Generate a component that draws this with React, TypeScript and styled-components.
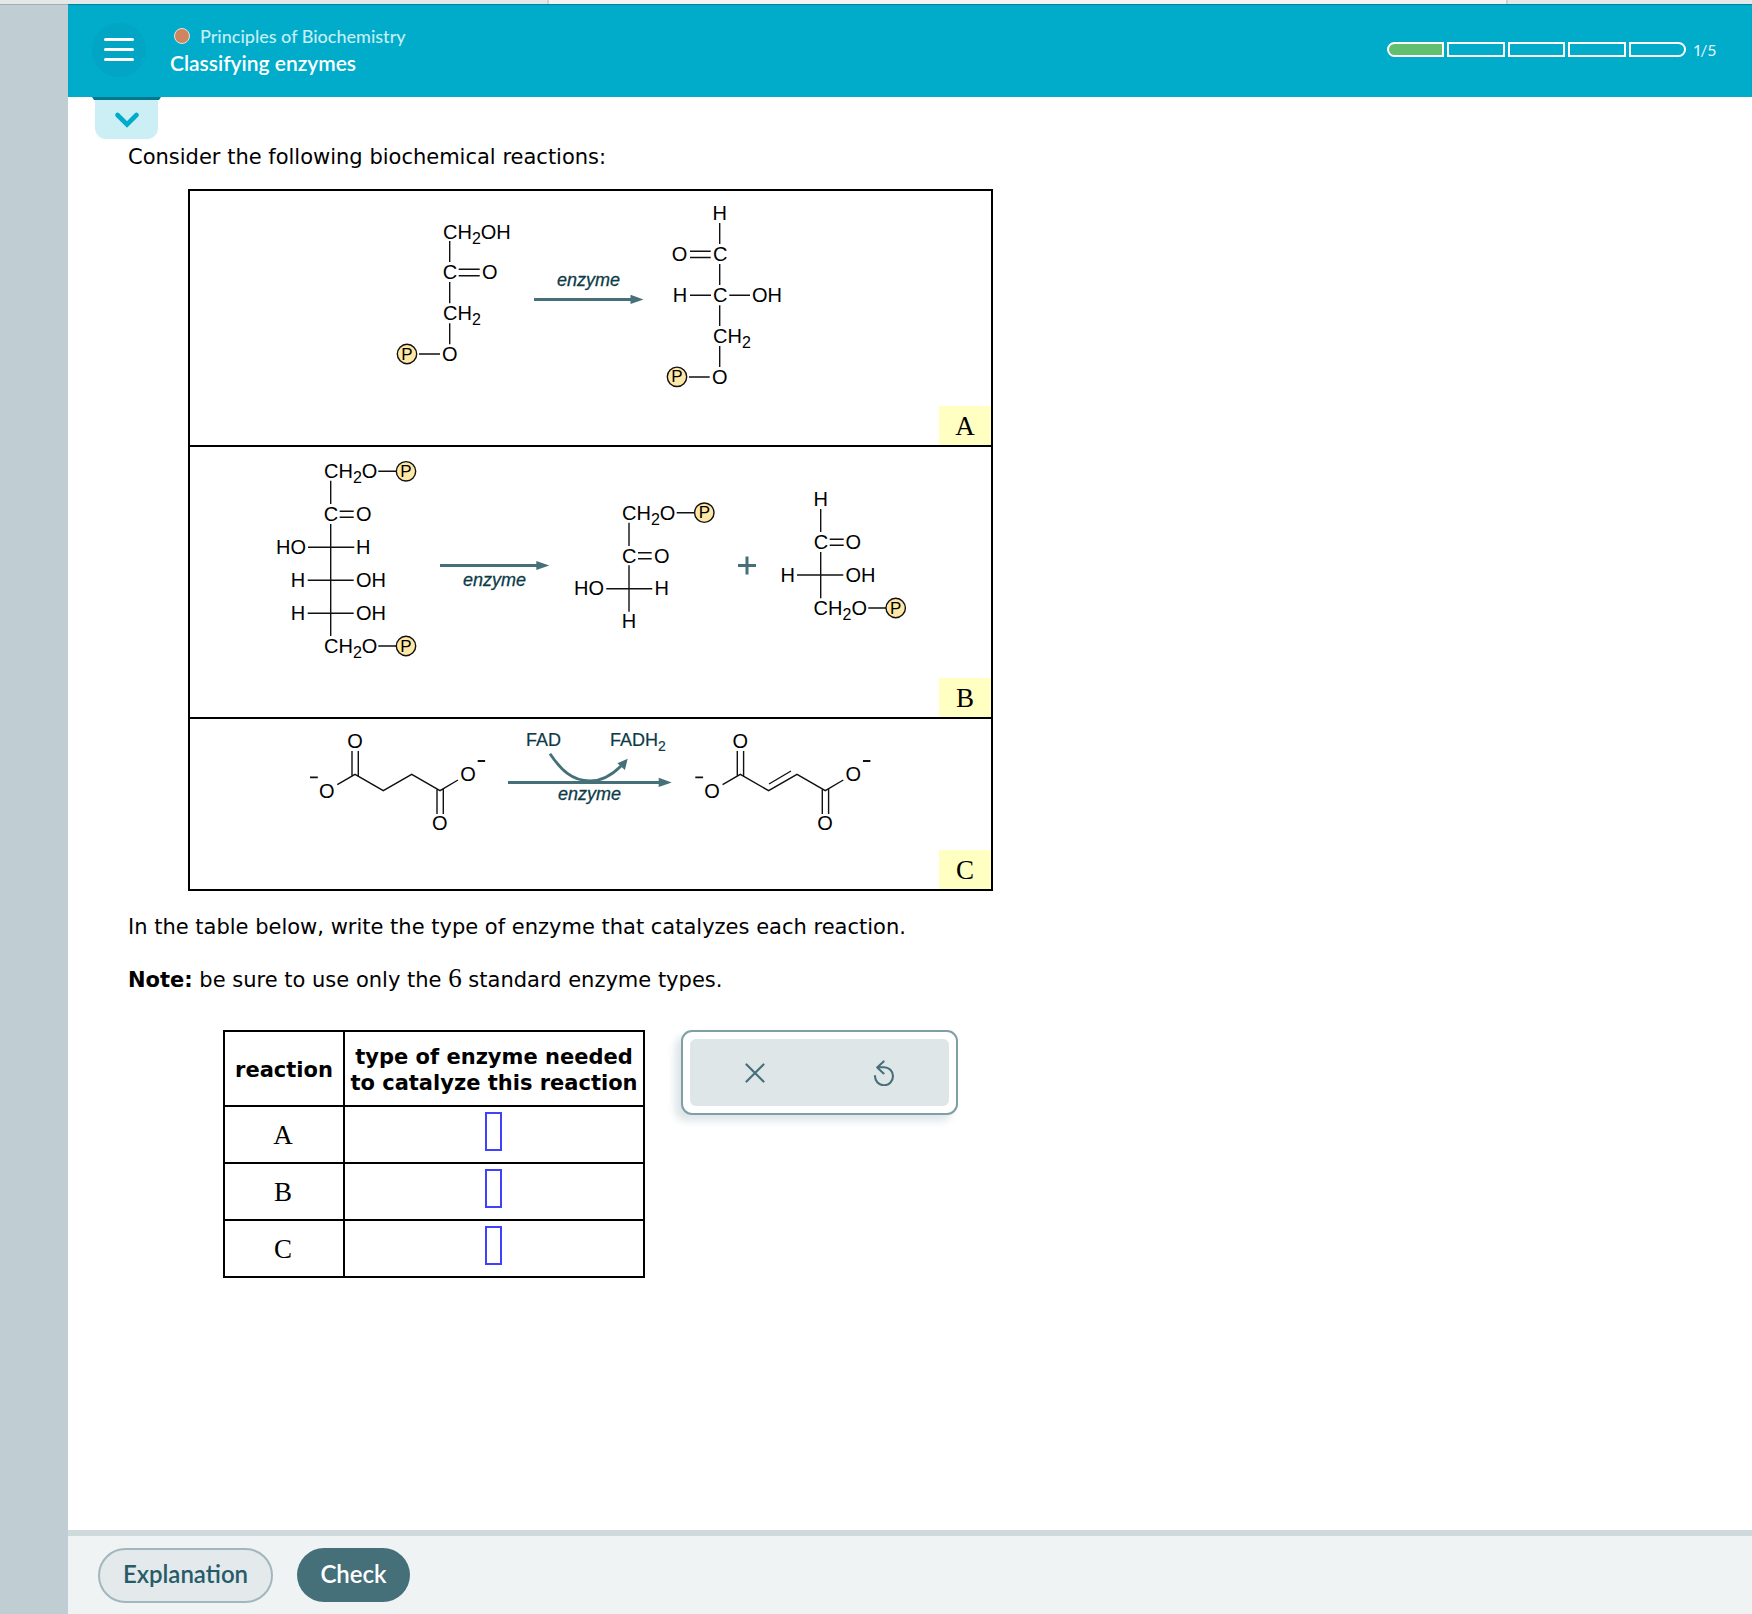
import React from 'react';
import styled, { createGlobalStyle, css } from 'styled-components';

const teal = '#00acca';
const slate = '#457079';
const ink = '#0d3b47';

const GlobalStyle = createGlobalStyle`
  *, *::before, *::after { box-sizing: border-box; }
  body {
    margin: 0;
    background: #fff;
    color: #000;
    font-family: Verdana, 'DejaVu Sans', sans-serif;
  }
`;

const uiFont = css`
  font-family: 'Proxima Nova', Lato, sans-serif;
`;
const mathFont = css`
  font-family: 'Times New Roman', 'Liberation Serif', serif;
`;

const Page = styled.div`
  display: flex;
  flex-direction: column;
  min-height: 100vh;
`;

const TabStrip = styled.div`
  display: flex;
  gap: 2px;
  height: 4px;
  background: #cfd2d3;
`;

const TabEdge = styled.div<{ $grow: number; $active?: boolean }>`
  flex: ${(p) => p.$grow} 0 0;
  background: ${(p) => (p.$active ? '#f2f4f4' : '#e5e8e8')};
`;

const Body = styled.div`
  display: flex;
  flex: 1;
`;

const Gutter = styled.div`
  flex: none;
  width: 68px;
  background: #c0cdd2;
  border-top: 1px solid #9fb0b7;
`;

const Main = styled.div`
  display: flex;
  flex: 1;
  flex-direction: column;
  min-width: 0;
`;

const Header = styled.header`
  ${uiFont}
  display: flex;
  align-items: center;
  height: 93px;
  padding: 0 37px 2px 24px;
  background: ${teal};
  box-shadow: inset 0 1px 1px #04809a;
`;

const MenuButton = styled.button`
  display: flex;
  flex-direction: column;
  align-items: center;
  justify-content: center;
  gap: 7px;
  width: 54px;
  height: 54px;
  margin-right: 24px;
  padding: 0;
  border: 0;
  border-radius: 50%;
  background: #02a5c3;
`;

const MenuLine = styled.span`
  width: 30px;
  height: 3px;
  border-radius: 2px;
  background: #fff;
`;

const Titles = styled.div`
  display: flex;
  flex: 1;
  flex-direction: column;
  gap: 2px;
`;

const Course = styled.div`
  display: flex;
  align-items: center;
  gap: 10px;
  padding-left: 4px;
  color: #c6eef5;
  font-size: 18px;
  font-weight: 500;
  line-height: 24px;
`;

const CourseDot = styled.span`
  width: 16px;
  height: 16px;
  border: 1px solid #e9e4dd;
  border-radius: 50%;
  background: #cf8660;
`;

const Topic = styled.h1`
  margin: 0;
  color: #fff;
  font-size: 21px;
  font-weight: 600;
  line-height: 26px;
`;

const Progress = styled.div`
  display: flex;
  align-items: center;
  gap: 8px;
  color: #e0f6fa;
  font-size: 16px;
  line-height: 24px;
`;

const Count = styled.span`
  width: 21px;
  font-variant-numeric: proportional-nums;
  white-space: nowrap;
`;

const Segments = styled.div`
  display: flex;
  gap: 3px;
  width: 299px;
`;

const Segment = styled.span<{ $done?: boolean }>`
  flex: 1;
  height: 15px;
  border: 2px solid #fff;
  background: ${(p) => (p.$done ? '#61bf70' : 'transparent')};
  &:first-child { border-radius: 8px 0 0 8px; }
  &:last-child { border-radius: 0 8px 8px 0; }
`;

const Content = styled.main`
  flex: 1;
  padding: 0 60px 40px;
`;

const Drawer = styled.button`
  position: relative;
  display: flex;
  align-items: center;
  justify-content: center;
  width: 63px;
  height: 42px;
  margin: 0 0 5px -33px;
  padding: 3px 0 0;
  border: 0;
  border-radius: 0 0 11px 11px;
  background: #cbeff4;
  &::before {
    content: '';
    position: absolute;
    top: 0;
    left: -3px;
    right: -3px;
    height: 3px;
    background: #00788d;
    clip-path: polygon(0 0, 100% 0, calc(100% - 2px) 100%, 2px 100%);
  }
`;

const Text = styled.p`
  margin: 0;
  font-size: 21px;
  line-height: 26px;
  & + & { margin-top: 27px; }
`;

const Six = styled.span`
  ${mathFont}
  font-size: 27px;
  line-height: 20px;
`;

const Reactions = styled.section`
  display: flex;
  flex-direction: column;
  gap: 2px;
  max-width: 805px;
  margin: 19px 0 23px 60px;
  border: 2px solid #000;
  background: #000;
`;

const Reaction = styled.figure`
  display: grid;
  margin: 0;
  background: #fff;
`;

const Drawing = styled.svg`
  grid-area: 1 / 1;
  display: block;
  width: 100%;
  height: auto;
  font-family: Helvetica, 'Liberation Sans', Arial, sans-serif;
  font-size: 20px;
`;

const Caption = styled.figcaption`
  ${mathFont}
  grid-area: 1 / 1;
  align-self: end;
  justify-self: end;
  width: 52px;
  height: 39px;
  background: #ffffc2;
  font-size: 27px;
  line-height: 41px;
  text-align: center;
`;

const AnswerArea = styled.div`
  display: flex;
  align-items: flex-start;
  gap: 36px;
  margin: 37px 0 0 95px;
`;

const AnswerTable = styled.table`
  width: 422px;
  border-collapse: collapse;
  table-layout: fixed;
`;

const Head = styled.th<{ $width: number }>`
  width: ${(p) => p.$width}px;
  height: 75px;
  padding: 2px 0 0;
  border: 2px solid #000;
  font-size: 21px;
  font-weight: 700;
  line-height: 26px;
  white-space: nowrap;
`;

const RowHead = styled.th`
  ${mathFont}
  height: 57px;
  padding: 0 2px 0 0;
  border: 2px solid #000;
  font-size: 27px;
  font-weight: 400;
  line-height: 30px;
`;

const Cell = styled.td`
  padding: 0 2px 6px 0;
  border: 2px solid #000;
  text-align: center;
  vertical-align: middle;
`;

const Answer = styled.input`
  display: block;
  width: 17px;
  height: 39px;
  margin: 0 auto;
  padding: 0;
  border: 2px solid #4040ff;
  outline: 0;
  background: #fff;
  font-size: 20px;
`;

const Palette = styled.div`
  width: 277px;
  padding: 7px;
  border: 2px solid #7f9fa7;
  border-radius: 11px;
  background: #fff;
  box-shadow: -6px 6px 9px #dde4e8;
`;

const PaletteRow = styled.div`
  display: flex;
  height: 67px;
  border-radius: 6px;
  background: #dfe6e8;
`;

const PaletteButton = styled.button`
  display: flex;
  flex: 1;
  align-items: center;
  justify-content: center;
  padding: 0;
  border: 0;
  background: transparent;
`;

const Footer = styled.footer`
  display: flex;
  align-items: center;
  gap: 24px;
  height: 84px;
  padding: 0 30px;
  border-top: 6px solid #cfdadd;
  background: #eff3f4;
`;

const Pill = styled.button<{ $primary?: boolean }>`
  ${uiFont}
  height: ${(p) => (p.$primary ? 54 : 55)}px;
  width: ${(p) => (p.$primary ? 113 : 175)}px;
  padding: 0 0 4px;
  border: ${(p) => (p.$primary ? '0' : '2px solid #a0b7be')};
  border-radius: 28px;
  background: ${(p) => (p.$primary ? slate : '#e4e9eb')};
  color: ${(p) => (p.$primary ? '#fff' : '#265c69')};
  font-size: 24px;
  font-weight: 600;
`;

/* ---- drawing helpers for the reaction schemes ---- */

type At = { x: number; y: number };

const Mid = ({ x, y, children }: At & { children: React.ReactNode }) => (
  <text x={x} y={y} textAnchor="middle">{children}</text>
);

const Bonds = ({ d }: { d: string }) => (
  <path d={d} fill="none" stroke="#111" strokeWidth="1.4" />
);

const Phosphate = ({ x, y }: At) => (
  <g>
    <circle cx={x} cy={y} r="9.7" fill="#ffe8a6" stroke="#111" strokeWidth="1.4" />
    <text x={x} y={Math.floor(y + 6)} textAnchor="middle" fontSize="17">P</text>
  </g>
);

const Methylene = ({ x, y, tail = '' }: At & { tail?: string }) => (
  <text x={x} y={y}>
    CH<tspan fontSize="16" dy="5">2</tspan>
    {tail && <tspan dy="-5">{tail}</tspan>}
  </text>
);

const Arrow = ({ x, y, end }: At & { end: number }) => (
  <g fill={slate}>
    <path d={`M${x} ${y - 1.5}H${end - 12}v3H${x}z`} />
    <path d={`M${end} ${y}l-13 -4.6v9.2z`} />
  </g>
);

const Enzyme = ({ x, y }: At) => (
  <text x={x} y={y} fontSize="18" fontStyle="italic" fill={ink} stroke={ink} strokeWidth="0.3">enzyme</text>
);

const Diacid = ({ shift = 0, unsaturated = false }: { shift?: number; unsaturated?: boolean }) => (
  <g transform={`translate(${shift} 0)`}>
    <Bonds d="M352 751V776M358.3 751V776M337.3 784.7L355 774.3L383.3 790.7L411.7 774.3L440 790.7L458 780M437 789V814M443.3 789V814" />
    {unsaturated && <Bonds d="M383.7 784L405.7 771" />}
    <path d="M310 777.3h7.8M477.7 761h7.4" stroke="#111" strokeWidth="1.8" />
    <Mid x={355} y={748}>O</Mid>
    <Mid x={326.7} y={798}>O</Mid>
    <Mid x={468} y={781}>O</Mid>
    <Mid x={439.7} y={830}>O</Mid>
  </g>
);

const ReactionA = () => (
  <Drawing viewBox="190 191 801 254" role="img" aria-label="Reaction A">
    <Methylene x={443} y={239} tail="OH" />
    <Mid x={450} y={279}>C</Mid>
    <Mid x={489.7} y={279}>O</Mid>
    <Methylene x={443} y={320} />
    <Mid x={449.7} y={361}>O</Mid>
    <Bonds d="M449.7 241V262M458.7 269.3H479.7M458.7 275.7H479.7M449.7 282V303.3M449.7 323.3V344.3M419 354H440" />
    <Phosphate x={407} y={354} />
    <Enzyme x={557} y={286} />
    <Arrow x={534} y={299.4} end={643.5} />
    <Mid x={719.7} y={220}>H</Mid>
    <Mid x={679.6} y={261}>O</Mid>
    <Mid x={720.3} y={261}>C</Mid>
    <Mid x={680} y={302}>H</Mid>
    <Mid x={720.3} y={302}>C</Mid>
    <text x="752" y="302">OH</text>
    <Methylene x={713} y={343} />
    <Mid x={719.7} y={384}>O</Mid>
    <Bonds d="M719.7 223V244M690 251.3H710.7M690 257.5H710.7M719.7 264V285M690 295.3H711M729.3 295.3H750M719.7 305.3V326M719.7 346V367M689 377H709.7" />
    <Phosphate x={677} y={376.8} />
  </Drawing>
);

const ReactionB = () => (
  <Drawing viewBox="190 447 801 270" role="img" aria-label="Reaction B">
    <Methylene x={324} y={478} tail="O" />
    <Mid x={331} y={521}>C</Mid>
    <Mid x={363.7} y={521}>O</Mid>
    <text x="306" y="554" textAnchor="end">HO</text>
    <text x="356" y="554">H</text>
    <Mid x={298} y={587}>H</Mid>
    <text x="356" y="587">OH</text>
    <Mid x={298} y={620}>H</Mid>
    <text x="356" y="620">OH</text>
    <Methylene x={324} y={653} tail="O" />
    <Bonds d="M330.7 480.7V504M339.7 511.2H353.7M339.7 517.2H353.7M330.7 524V636M308 547.3H354.3M307.7 580.3H353.7M307.7 613.3H353.7M378.3 471.3H396M378.3 646H396" />
    <Phosphate x={406} y={471.3} />
    <Phosphate x={406} y={646} />
    <Arrow x={440} y={565.5} end={549.3} />
    <Enzyme x={463} y={586} />
    <Methylene x={622} y={520} tail="O" />
    <Mid x={629.3} y={563}>C</Mid>
    <Mid x={661.7} y={563}>O</Mid>
    <text x="604" y="595" textAnchor="end">HO</text>
    <text x="654.4" y="595">H</text>
    <Mid x={629} y={628}>H</Mid>
    <Bonds d="M629 522.7V546M638 552.7H651.7M638 558.7H651.7M629 565.3V611.7M606.3 588.7H652.3M676.7 512.7H694" />
    <Phosphate x={704.3} y={512.7} />
    <path d="M738 565.5h18M747 556.5v18" stroke={slate} strokeWidth="3" />
    <Mid x={820.7} y={506}>H</Mid>
    <Mid x={821} y={549}>C</Mid>
    <Mid x={853.3} y={549}>O</Mid>
    <Mid x={787.7} y={582}>H</Mid>
    <text x="845.5" y="582">OH</text>
    <Methylene x={813.6} y={615} tail="O" />
    <Bonds d="M820.7 509V532M829.7 539.3H843.7M829.7 545.3H843.7M820.7 552V598.3M797 575H843.3M868.3 608H886" />
    <Phosphate x={895.7} y={608} />
  </Drawing>
);

const ReactionC = () => (
  <Drawing viewBox="190 719 801 170" role="img" aria-label="Reaction C">
    <Diacid />
    <g fontSize="18" fill={ink} stroke={ink} strokeWidth="0.2">
      <text x="526" y="746">FAD</text>
      <text x="610" y="746">FADH<tspan fontSize="14" dy="5">2</tspan></text>
    </g>
    <path d="M550 753.7C561 770 572 781 590 781C602 781 612 775 621 766" fill="none" stroke={slate} strokeWidth="2.8" />
    <path d="M627.7 758.7L617.4 763.2L624.9 770z" fill={slate} />
    <Arrow x={508} y={782.4} end={671.7} />
    <Enzyme x={558} y={800} />
    <Diacid shift={385.3} unsaturated />
  </Drawing>
);

const schemes = [
  { name: 'A', Scheme: ReactionA },
  { name: 'B', Scheme: ReactionB },
  { name: 'C', Scheme: ReactionC },
];

export default function App() {
  return (
    <Page>
      <GlobalStyle />
      <TabStrip>
        <TabEdge $grow={547} />
        <TabEdge $grow={957} $active />
        <TabEdge $grow={244} />
      </TabStrip>
      <Body>
        <Gutter />
        <Main>
          <Header>
            <MenuButton type="button" aria-label="Menu">
              <MenuLine />
              <MenuLine />
              <MenuLine />
            </MenuButton>
            <Titles>
              <Course><CourseDot />Principles of Biochemistry</Course>
              <Topic>Classifying enzymes</Topic>
            </Titles>
            <Progress>
              <Segments>
                {[1, 2, 3, 4, 5].map((n) => <Segment key={n} $done={n === 1} />)}
              </Segments>
              <Count>1/5</Count>
            </Progress>
          </Header>
          <Content>
            <Drawer type="button" aria-label="Expand">
              <svg width="26" height="18" viewBox="0 0 26 18" fill="none" stroke={teal} strokeWidth="4.6" strokeLinecap="round">
                <path d="M3.5 4L13 13.5L22.5 4" />
              </svg>
            </Drawer>
            <Text>Consider the following biochemical reactions:</Text>
            <Reactions>
              {schemes.map(({ name, Scheme }) => (
                <Reaction key={name}>
                  <Scheme />
                  <Caption>{name}</Caption>
                </Reaction>
              ))}
            </Reactions>
            <Text>In the table below, write the type of enzyme that catalyzes each reaction.</Text>
            <Text><b>Note:</b> be sure to use only the <Six>6</Six> standard enzyme types.</Text>
            <AnswerArea>
              <AnswerTable>
                <thead>
                  <tr>
                    <Head scope="col" $width={120}>reaction</Head>
                    <Head scope="col" $width={300}>type of enzyme needed<br />to catalyze this reaction</Head>
                  </tr>
                </thead>
                <tbody>
                  {schemes.map(({ name }) => (
                    <tr key={name}>
                      <RowHead scope="row" id={`row-${name}`}>{name}</RowHead>
                      <Cell><Answer type="text" aria-labelledby={`row-${name}`} /></Cell>
                    </tr>
                  ))}
                </tbody>
              </AnswerTable>
              <Palette>
                <PaletteRow>
                  <PaletteButton type="button" aria-label="Clear">
                    <svg width="20" height="20" viewBox="0 0 20 20" fill="none" stroke={slate} strokeWidth="2.2" strokeLinecap="round">
                      <path d="M1.5 1.5L18.5 18.5M18.5 1.5L1.5 18.5" />
                    </svg>
                  </PaletteButton>
                  <PaletteButton type="button" aria-label="Undo">
                    <svg width="22" height="26" viewBox="0 0 22 26" fill="none" stroke={slate} strokeWidth="2.1" strokeLinecap="round" strokeLinejoin="round">
                      <path d="M2 16A9 9 0 1 0 11 7.2H4.2M10.6 1.4L4.2 7.4L10.6 13.4" />
                    </svg>
                  </PaletteButton>
                </PaletteRow>
              </Palette>
            </AnswerArea>
          </Content>
          <Footer>
            <Pill type="button">Explanation</Pill>
            <Pill type="button" $primary>Check</Pill>
          </Footer>
        </Main>
      </Body>
    </Page>
  );
}
